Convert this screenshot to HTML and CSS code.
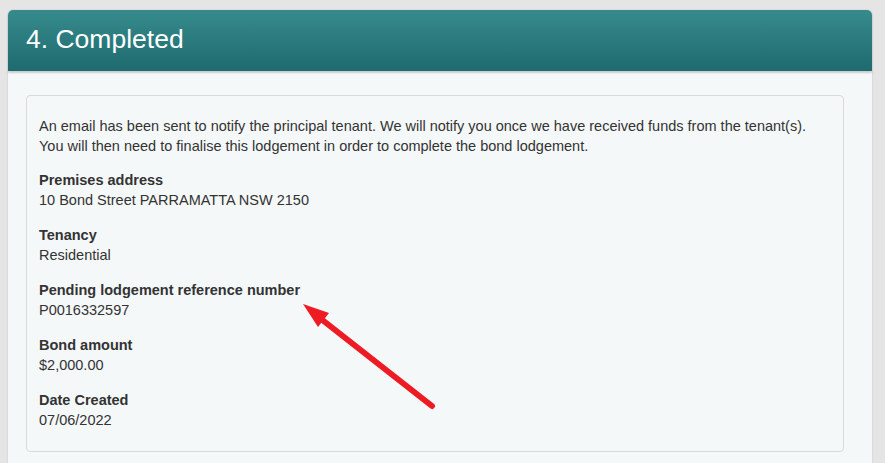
FILE: index.html
```html
<!DOCTYPE html>
<html>
<head>
<meta charset="utf-8">
<link rel="stylesheet" href="styles.css">
</head>
<body>
<div class="panel">
  <div class="panel-header"><h2 class="panel-title">4. Completed</h2></div>
  <div class="panel-body">
    <div class="card">
      <p class="intro">An email has been sent to notify the principal tenant. We will notify you once we have received funds from the tenant(s). You will then need to finalise this lodgement in order to complete the bond lodgement.</p>
      <div class="field"><div class="label">Premises address</div><div class="value">10 Bond Street PARRAMATTA NSW 2150</div></div>
      <div class="field"><div class="label">Tenancy</div><div class="value">Residential</div></div>
      <div class="field"><div class="label">Pending lodgement reference number</div><div class="value">P0016332597</div></div>
      <div class="field"><div class="label">Bond amount</div><div class="value">$2,000.00</div></div>
      <div class="field"><div class="label">Date Created</div><div class="value">07/06/2022</div></div>
    </div>
  </div>
</div>
<svg class="arrow" width="885" height="463" viewBox="0 0 885 463">
  <line x1="432" y1="406" x2="316" y2="315" stroke="#ed1c24" stroke-width="6" stroke-linecap="round"/>
  <polygon points="303,304 329,313 318,327" fill="#ed1c24"/>
</svg>
</body>
</html>
```
FILE: styles.css
```css
html, body {
  margin: 0;
  padding: 0;
  background: #e5e5e5;
  font-family: "Liberation Sans", Arial, sans-serif;
  color: #333;
  overflow: hidden;
}
.panel {
  margin: 10px 13px 0 8px;
  background: #f5f8f9;
  border-radius: 5px 5px 0 0;
  box-shadow: 0 0 2px rgba(0,0,0,0.15);
  min-height: 460px;
}
.panel-header {
  height: 61px;
  background: linear-gradient(to bottom, #378b8d, #1e6a6f);
  border-radius: 5px 5px 0 0;
  display: flex;
  align-items: center;
  padding-left: 18px;
  box-shadow: 0 2px 2px rgba(0,0,0,0.18);
  position: relative;
}
.panel-title {
  margin: 0;
  font-size: 26.5px;
  font-weight: normal;
  color: #fff;
  line-height: 1;
  padding-bottom: 2px;
}
.panel-body {
  padding: 24px 28px 0 18px;
}
.card {
  border: 1px solid #dadada;
  border-radius: 4px;
  padding: 20px 12px 21px 12px;
  font-size: 14.5px;
  line-height: 20px;
}
.intro {
  margin: 0 0 14px 0;
}
.field + .field {
  margin-top: 15px;
}
.label {
  font-weight: bold;
}
.arrow {
  position: absolute;
  left: 0;
  top: 0;
  pointer-events: none;
}
```
